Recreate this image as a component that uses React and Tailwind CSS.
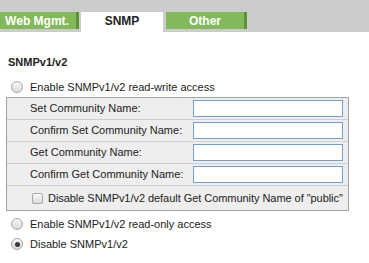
import React from "react";

function Radio({ checked }) {
  return (
    <span className="flex h-[12px] w-[12px] shrink-0 items-center justify-center rounded-full border border-[#a8a8a8] bg-linear-to-b from-[#f7f7f7] to-[#d9d9d9]">
      {checked && <span className="h-[5px] w-[5px] rounded-full bg-[#3a3a3a]" />}
    </span>
  );
}

function Field({ label }) {
  return (
    <div className="flex h-[22px] items-center border-b border-[#cfcfcf] pl-[23px]">
      <span className="w-[163px]">{label}</span>
      <input
        type="text"
        className="h-[17px] w-[150px] border border-[#6f9fd6] bg-white outline-none"
      />
    </div>
  );
}

export default function App() {
  return (
    <div className="h-[263px] w-[369px] bg-white font-['Liberation_Sans',Arial,sans-serif] text-[11px] text-[#222]">
      <div className="flex h-[32px] items-end bg-[#cccccc]">
        <div className="mb-[3px] flex h-[17px] w-[79px] items-center justify-center border-r-[3px] border-[#5b9435] bg-[#82b95a] pr-[2px] text-[12px] font-bold text-white">
          Web Mgmt.
        </div>
        <div className="ml-[2px] flex h-[20px] w-[82px] items-center justify-center bg-white pb-[3px] text-[12px] font-bold text-[#222]">
          SNMP
        </div>
        <div className="mb-[3px] ml-[3px] flex h-[17px] w-[81px] items-center justify-center border-r-[3px] border-[#5b9435] bg-[#82b95a] text-[12px] font-bold text-white">
          Other
        </div>
      </div>

      <div className="ml-[8px] mt-[23px] h-[14px] font-bold leading-[14px]">SNMPv1/v2</div>

      <div className="ml-[11px] mt-[11px] flex h-[14px] items-center gap-[7px]">
        <Radio />
        <span>Enable SNMPv1/v2 read-write access</span>
      </div>

      <div className="ml-[6px] mt-[3px] w-[343px] border border-[#a2a2a2] bg-[#eeeeee]">
        <Field label="Set Community Name:" />
        <Field label="Confirm Set Community Name:" />
        <Field label="Get Community Name:" />
        <Field label="Confirm Get Community Name:" />
        <div className="flex h-[24px] items-center gap-[5px] pl-[25px]">
          <span className="h-[11px] w-[11px] shrink-0 rounded-[2px] border border-[#a8a8a8] bg-linear-to-b from-[#f7f7f7] to-[#dcdcdc]" />
          <span className="whitespace-nowrap tracking-[-0.05px]">
            Disable SNMPv1/v2 default Get Community Name of "public"
          </span>
        </div>
      </div>

      <div className="ml-[11px] mt-[6px] flex h-[14px] items-center gap-[7px]">
        <Radio />
        <span>Enable SNMPv1/v2 read-only access</span>
      </div>
      <div className="ml-[11px] mt-[6px] flex h-[14px] items-center gap-[7px]">
        <Radio checked />
        <span>Disable SNMPv1/v2</span>
      </div>
    </div>
  );
}
